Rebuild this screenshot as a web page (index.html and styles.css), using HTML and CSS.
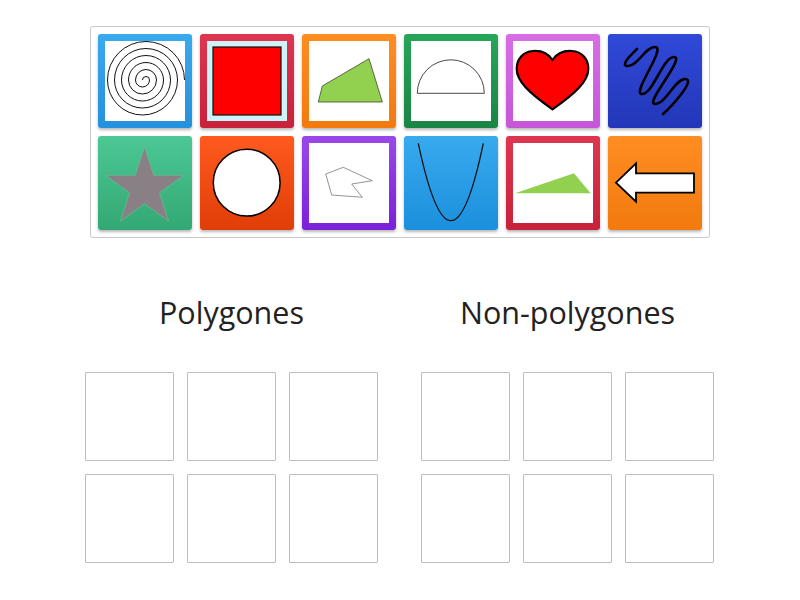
FILE: index.html
```html
<!DOCTYPE html>
<html lang="fr">
<head>
<meta charset="utf-8">
<title>Polygones</title>
<link rel="stylesheet" href="styles.css">
</head>
<body>
<div class="board">
  <div class="tile framed t-blue"><div class="pic">
    <svg viewBox="0 0 80 80" width="80" height="80"><path fill="none" stroke="#111" stroke-width="1" d="M37.5,39 A3.5,3.5 0 0 1 44.5,39 A7,7 0 0 1 30.5,39 A10.5,10.5 0 0 1 51.5,39 A14,14 0 0 1 23.5,39 A17.5,17.5 0 0 1 58.5,39 A21,21 0 0 1 16.5,39 A24.5,24.5 0 0 1 65.5,39 A28,28 0 0 1 9.5,39 A31.5,31.5 0 0 1 72.5,39 A35,35 0 0 1 2.5,39 A38.5,38.5 0 0 1 79.5,39"/></svg>
  </div></div>
  <div class="tile framed t-crimson"><div class="pic pic-cyan">
    <svg viewBox="0 0 80 80" width="80" height="80"><rect x="6" y="6" width="68" height="68" fill="#ff0000" stroke="#111" stroke-width="1.2"/></svg>
  </div></div>
  <div class="tile framed t-orange"><div class="pic">
    <svg viewBox="0 0 80 80" width="80" height="80"><polygon points="9.3,61 13.3,45 60,17.7 73.3,61" fill="#92d050" stroke="#3b4a2c" stroke-width="0.8"/></svg>
  </div></div>
  <div class="tile framed t-green"><div class="pic">
    <svg viewBox="0 0 80 80" width="80" height="80"><path d="M6.3,52.3 A33.5,33.5 0 0 1 73.3,52.3 Z" fill="#fff" stroke="#333" stroke-width="0.9"/></svg>
  </div></div>
  <div class="tile framed t-violet"><div class="pic">
    <svg viewBox="0 0 80 80" width="80" height="80"><path d="M39.5,19 C35,12 28,9.5 20,10 C10,10.5 3.7,18 3.7,28 C3.7,40 16,52 39.5,68.3 C63,52 75.3,40 75.3,28 C75.3,18 69,10.5 59,10 C51,9.5 44,12 39.5,19 Z" fill="#ff0000" stroke="#000" stroke-width="2.2" stroke-linejoin="round"/></svg>
  </div></div>
  <div class="tile t-royal">
    <svg viewBox="0 0 94 94" width="94" height="94"><path d="M29,15 C24,20 11,32 20,32 C30,32 37,13 47,13 C59,13 23,60 34,60 C45,60 55,23 66,23 C78,23 36,70 47,70 C58,70 67,45 77,45 C89,45 62,74 55,80" fill="none" stroke="#000" stroke-width="2.6" stroke-linecap="round" stroke-linejoin="round"/></svg>
  </div>

  <div class="tile t-teal">
    <svg viewBox="0 0 94 94" width="94" height="94"><polygon points="46.5,11 55.7,39.3 85.5,39.3 61.4,56.8 70.6,85.2 46.5,67.7 22.4,85.2 31.6,56.8 7.5,39.3 37.3,39.3" fill="#888085" stroke="#6fbf95" stroke-width="0.6"/></svg>
  </div>
  <div class="tile t-red-orange">
    <svg viewBox="0 0 94 94" width="94" height="94"><circle cx="46.7" cy="46.7" r="33.4" fill="#fff" stroke="#000" stroke-width="1.5"/></svg>
  </div>
  <div class="tile framed t-purple"><div class="pic">
    <svg viewBox="0 0 80 80" width="80" height="80"><polygon points="16.7,31 34.3,24.3 63.3,37.7 42.7,41 53.3,54.3 22.7,52" fill="none" stroke="#666" stroke-width="0.7"/></svg>
  </div></div>
  <div class="tile t-sky">
    <svg viewBox="0 0 94 94" width="94" height="94"><path d="M14.3,7.3 Q47,162 79.3,7.3" fill="none" stroke="#111" stroke-width="1.3"/></svg>
  </div>
  <div class="tile framed t-crimson"><div class="pic">
    <svg viewBox="0 0 80 80" width="80" height="80"><polygon points="2,50.3 61,30.3 77.7,50.3" fill="#92d050"/></svg>
  </div></div>
  <div class="tile t-orange">
    <svg viewBox="0 0 94 94" width="94" height="94"><polygon points="8,46.7 28,27.3 28,37.3 86,37.3 86,56.7 28,56.7 28,65.7" fill="#fff" stroke="#000" stroke-width="1.8" stroke-linejoin="miter"/></svg>
  </div>
</div>

<div class="zones">
  <div class="zone">
    <h2 class="zone-title">Polygones</h2>
    <div class="slots">
      <div class="slot"></div><div class="slot"></div><div class="slot"></div>
      <div class="slot"></div><div class="slot"></div><div class="slot"></div>
    </div>
  </div>
  <div class="zone">
    <h2 class="zone-title">Non-polygones</h2>
    <div class="slots">
      <div class="slot"></div><div class="slot"></div><div class="slot"></div>
      <div class="slot"></div><div class="slot"></div><div class="slot"></div>
    </div>
  </div>
</div>
</body>
</html>
```

FILE: styles.css
```css
* { box-sizing: border-box; }

html, body {
  margin: 0;
  padding: 0;
  background: #fff;
  font-family: "Open Sans", "Noto Sans", sans-serif;
  color: #222;
}

.board {
  width: 620px;
  margin: 26px auto 0;
  padding: 7px;
  border: 1px solid #c9c9c9;
  border-radius: 3px;
  display: grid;
  grid-template-columns: repeat(6, 94px);
  gap: 8px;
}

.tile {
  width: 94px;
  height: 94px;
  border-radius: 3px;
  box-shadow: 0 2px 3px rgba(0, 0, 0, 0.28);
  overflow: hidden;
}

.tile svg { display: block; }

.framed { padding: 7px; }

.pic {
  width: 80px;
  height: 80px;
  background: #fff;
}

.pic-cyan { background: #cdf4f8; }

.t-blue { background: linear-gradient(#3aaaee, #2391dc); }
.t-crimson { background: linear-gradient(#de3650, #c8213a); }
.t-orange { background: linear-gradient(#ff8d22, #f27a0e); }
.t-green { background: linear-gradient(#27a65a, #1a8444); }
.t-violet { background: linear-gradient(#d86ee6, #c556d8); }
.t-royal { background: linear-gradient(#3049d8, #2237b8); }
.t-teal { background: linear-gradient(#4cc895, #33a874); }
.t-red-orange { background: linear-gradient(#ff5a1e, #e03e08); }
.t-purple { background: linear-gradient(#9a48ea, #7a20d8); }
.t-sky { background: linear-gradient(#38aaee, #1c8fdd); }

.zones {
  display: flex;
  justify-content: center;
  gap: 43px;
  margin-top: 54px;
  padding-right: 1px;
}

.zone { width: 293px; }

.zone-title {
  margin: 0 0 40px;
  font-size: 30.5px;
  font-weight: 400;
  line-height: 40px;
  text-align: center;
  color: #222;
}

.slots {
  display: grid;
  grid-template-columns: repeat(3, 89px);
  gap: 13px;
}

.slot {
  width: 89px;
  height: 89px;
  border: 1px solid #bdbdbd;
  border-radius: 1px;
}
```
